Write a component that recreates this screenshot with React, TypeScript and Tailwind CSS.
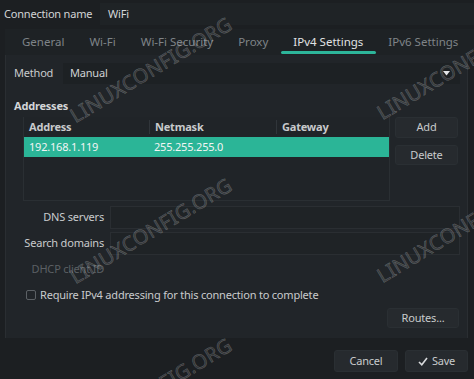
import React from "react";

const tabs = ["General", "Wi-Fi", "Wi-Fi Security", "Proxy", "IPv4 Settings", "IPv6 Settings"];

const Watermark = ({ className }: { className: string }) => (
	<div
		className={`pointer-events-none absolute origin-bottom-left rotate-[-31deg] whitespace-nowrap text-[20px] leading-[20px] tracking-[0.3px] text-white/10 [-webkit-text-stroke:0.5px_rgba(255,255,255,0.24)] ${className}`}
	>
		LINUXCONFIG.ORG
	</div>
);

const Button = ({ children, className = "" }: { children: React.ReactNode; className?: string }) => (
	<div
		className={`flex items-center justify-center rounded-[3px] border border-[#2a2f33] bg-[#262a2e] text-[#c8cacc] ${className}`}
	>
		{children}
	</div>
);

export default function App() {
	return (
		<div className="relative h-[379px] w-[474px] overflow-hidden bg-[#1c1f22] font-['Noto_Sans',sans-serif] text-[11px] tracking-[-0.2px] text-[#c9cbcd]">
			{/* Connection name */}
			<div className="mt-[3px] flex h-[22px] items-center">
				<span className="w-[100px] pl-[4px] text-[#d2d4d6]">Connection name</span>
				<div className="flex h-full flex-1 items-center bg-[#1f2326] pl-[8px] text-[#d4d6d8]">WiFi</div>
			</div>

			{/* Tabs */}
			<div className="ml-[5px] mt-[4px] flex h-[26px] bg-[#1e2225] pl-[4.5px] text-[11.5px] tracking-normal">
				{tabs.map((t) => {
					const active = t === "IPv4 Settings";
					return (
						<div key={t} className="relative flex items-center px-[12.5px]">
							<span className={active ? "text-[#e0e2e4]" : "text-[#7f8488]"}>{t}</span>
							{active && (
								<div className="absolute bottom-[1px] left-0 right-0 h-[3px] rounded-full bg-[#2db59a]" />
							)}
						</div>
					);
				})}
			</div>

			{/* Panel */}
			<div className="ml-[5px] mr-[6px] flex h-[283px] flex-col border-x border-[#2a2e32] bg-[#212529] pt-[8px]">
				{/* Method */}
				<div className="flex h-[21px] items-center">
					<span className="w-[57px] pl-[8px]">Method</span>
					<div className="relative mr-[7px] flex h-full flex-1 items-center bg-[#1d2124] pl-[7px] text-[#d0d2d4]">
						Manual
						<svg className="absolute right-[10px] top-[8px]" width="7" height="5" viewBox="0 0 7 5">
							<path d="M0 0 L7 0 L3.5 4.5 Z" fill="#e4e6e8" />
						</svg>
					</div>
				</div>

				<div className="mt-[15px] h-[14px] pl-[8px] font-bold leading-[14px] text-[#d4d6d8]">Addresses</div>

				{/* Address table + buttons */}
				<div className="mt-[4px] flex pl-[17px]">
					<div className="flex h-[84px] w-[367px] flex-col border border-t-0 border-[#2a2f33] bg-[#202428]">
						<div className="flex h-[20px] items-center font-bold text-[#c8cacc]">
							<div className="w-[125px] pl-[5px]">Address</div>
							<div className="h-[14px] w-px bg-[#30353a]" />
							<div className="w-[126px] pl-[5px]">Netmask</div>
							<div className="h-[14px] w-px bg-[#30353a]" />
							<div className="flex-1 pl-[5px]">Gateway</div>
						</div>
						<div className="flex h-[20px] items-center bg-[#2bb597] text-[#f2f4f4]">
							<div className="w-[125px] pl-[5px]">192.168.1.119</div>
							<div className="w-[127px] pl-[5px]">255.255.255.0</div>
						</div>
					</div>
					<div className="ml-[5px] flex w-[63px] flex-col gap-[7px]">
						<Button className="h-[21px]">Add</Button>
						<Button className="h-[20px]">Delete</Button>
					</div>
				</div>

				{/* DNS / Search */}
				<div className="mt-[5px] flex h-[23px] items-center">
					<span className="w-[98px] text-right">DNS servers</span>
					<div className="ml-[6px] mr-[7px] h-full flex-1 border border-[#2a2e32] bg-[#1f2326]" />
				</div>
				<div className="mt-[3px] flex h-[23px] items-center">
					<span className="w-[98px] text-right">Search domains</span>
					<div className="ml-[6px] mr-[7px] h-full flex-1 border border-[#2a2e32] bg-[#1f2326]" />
				</div>
				<div className="mt-[3px] flex h-[23px] items-center">
					<span className="w-[98px] text-right text-[#5b6064]">DHCP client ID</span>
				</div>

				{/* Checkbox */}
				<div className="mt-[6px] flex h-[16px] items-center pl-[20px]">
					<div className="h-[10px] w-[10px] rounded-[2px] border border-[#5c6165]" />
					<span className="ml-[4px]">Require IPv4 addressing for this connection to complete</span>
				</div>

				<div className="mt-[5px] flex justify-end pr-[8px]">
					<Button className="h-[20px] w-[72px]">Routes...</Button>
				</div>
			</div>

			{/* Footer */}
			<div className="mt-[12px] flex justify-end gap-[7px] pr-[6px]">
				<Button className="h-[22px] w-[64px]">Cancel</Button>
				<Button className="h-[22px] w-[63px] gap-[4px]">
					<svg width="10" height="9" viewBox="0 0 10 9">
						<path d="M1 5 L3.8 7.8 L9 1" fill="none" stroke="#d8dadc" strokeWidth="1.6" />
					</svg>
					Save
				</Button>
			</div>

			{/* Watermarks */}
			<Watermark className="left-[77px] top-[106px]" />
			<Watermark className="left-[384px] top-[103px]" />
			<Watermark className="left-[77px] top-[267px]" />
			<Watermark className="left-[384px] top-[266px]" />
			<Watermark className="left-[77px] top-[427px]" />
		</div>
	);
}
